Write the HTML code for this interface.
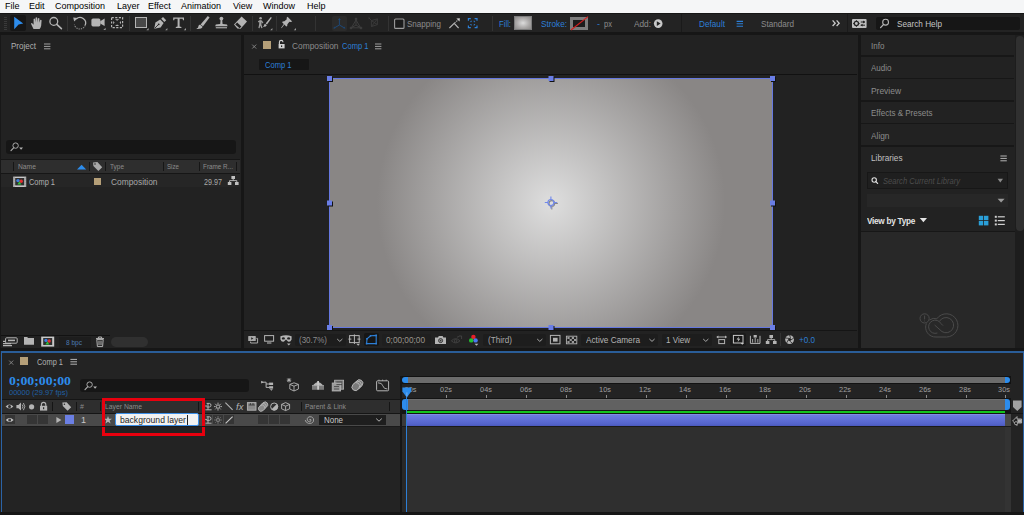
<!DOCTYPE html>
<html>
<head>
<meta charset="utf-8">
<title>After Effects</title>
<style>
*{box-sizing:border-box;margin:0;padding:0}
html,body{width:1024px;height:515px;overflow:hidden;background:#161616;font-family:"Liberation Sans",sans-serif;font-size:9px;color:#a8a8a8}
.abs,.abs *{position:absolute}
#root{position:relative;width:1024px;height:515px;overflow:hidden}
#menubar{left:0;top:0;width:1024px;height:13px;background:#f5f6f7;color:#000;font-size:9px}
#menubar span{top:0;line-height:12px;white-space:nowrap}
#toolbar{left:0;top:13px;width:1024px;height:20px;background:#161616}
.panel{background:#222}
.t{white-space:nowrap;line-height:12px}
.blue{color:#2d8ceb}
.sep{background:#161616}
</style>
</head>
<body>
<div id="root" class="abs">

<!-- MENU BAR -->
<div id="menubar">
<span style="left:5px">File</span>
<span style="left:29px">Edit</span>
<span style="left:55px">Composition</span>
<span style="left:117px">Layer</span>
<span style="left:148px">Effect</span>
<span style="left:181px">Animation</span>
<span style="left:233px">View</span>
<span style="left:263px">Window</span>
<span style="left:307px">Help</span>
</div>

<!-- TOOLBAR -->
<div id="toolbar">
<div style="left:0;top:1px;width:1024px;height:18px;background:#232323"></div>
<div class="vsep" style="left:4px;top:4px;width:3px;height:13px;background:repeating-linear-gradient(#3a3a3a 0 1px,#232323 1px 2px)"></div>
<div style="left:10px;top:2px;width:16px;height:16px;background:#161616;border-radius:2px"></div>
<svg style="left:0;top:0" width="1024" height="20" viewBox="0 13 1024 20">
<!-- selection arrow -->
<path d="M14.2 16.8 L23.2 23.6 L18.6 24.4 L14.2 29.2 Z" fill="#2d8ceb"/>
<!-- hand -->
<path d="M33.5 29 L31.2 24.2 Q30.8 22.8 32 23 L33.6 24.8 L33.6 19 Q34.3 18 35 19 L35.3 22.4 L35.6 17.8 Q36.4 16.8 37.2 17.8 L37.4 22.4 L37.9 18.4 Q38.7 17.5 39.4 18.5 L39.4 22.8 L40.2 20 Q41 19.3 41.6 20.2 L41.2 25.5 Q40.8 27.5 39.6 29 Z" fill="#b4b4b4"/>
<!-- zoom -->
<circle cx="53.8" cy="21.4" r="3.9" fill="none" stroke="#b4b4b4" stroke-width="1.3"/>
<path d="M56.8 24.4 L61.4 28.6" stroke="#b4b4b4" stroke-width="1.6" stroke-linecap="round"/>
<rect x="67" y="16" width="1" height="15" fill="#333"/>
<!-- rotate -->
<path d="M76.2 19 A5.6 5.6 0 0 1 85.2 25.2" fill="none" stroke="#b4b4b4" stroke-width="1.3"/>
<path d="M85.2 25.2 A5.6 5.6 0 0 1 74.4 24.6" fill="none" stroke="#8a8a8a" stroke-width="1.1" stroke-dasharray="1.3 1"/>
<path d="M73.2 17.4 L77.8 18 L74.2 21.6 Z" fill="#b4b4b4"/>
<!-- camera -->
<rect x="91.4" y="18.4" width="9" height="8" rx="1.6" fill="#b4b4b4"/>
<path d="M100.2 21.2 L104.6 18.6 L104.6 26 L100.2 23.6 Z" fill="#b4b4b4"/>
<path d="M105.6 27.8 L105.6 30 L103.4 30 Z" fill="#9a9a9a"/>
<!-- pan behind -->
<rect x="111.6" y="17.6" width="11" height="10" fill="none" stroke="#b4b4b4" stroke-width="1.2" stroke-dasharray="2.2 1.4"/>
<path d="M115 19.2 L119.2 19.2 L117.1 20.8 Z M115 26 L119.2 26 L117.1 24.4 Z M113.2 21 L113.2 24.2 L114.6 22.6 Z M121 21 L121 24.2 L119.6 22.6 Z" fill="#b4b4b4"/>
<rect x="129" y="16" width="1" height="15" fill="#333"/>
<!-- rect tool -->
<rect x="135.5" y="17.5" width="11" height="10" fill="#484848" stroke="#b4b4b4" stroke-width="1"/>
<path d="M148.6 28 L148.6 30.2 L146.4 30.2 Z" fill="#9a9a9a"/>
<!-- pen -->
<path d="M154.2 28.8 L155.4 22.6 L160.2 19.6 L163.6 23 L160.6 27.6 Z" fill="#b4b4b4"/>
<path d="M154.6 28.4 L158.4 24.6" stroke="#232323" stroke-width="0.9"/>
<circle cx="158.7" cy="24.3" r="0.9" fill="#232323"/>
<path d="M161.2 18.8 L163 17 L166.2 20.2 L164.4 22 Z" fill="#b4b4b4"/>
<path d="M167.4 28 L167.4 30.2 L165.2 30.2 Z" fill="#9a9a9a"/>
<!-- T -->
<path d="M173.2 17.4 L184 17.4 L184 20.2 L183 20.2 L182.6 18.8 L179.6 18.8 L179.6 26.6 L181.4 27 L181.4 28 L175.8 28 L175.8 27 L177.6 26.6 L177.6 18.8 L174.6 18.8 L174.2 20.2 L173.2 20.2 Z" fill="#b4b4b4"/>
<path d="M186 28 L186 30.2 L183.8 30.2 Z" fill="#9a9a9a"/>
<rect x="190" y="16" width="1" height="15" fill="#333"/>
<!-- brush -->
<path d="M207.8 16 L209.6 17.4 L203 26.2 L200.6 24.4 Z" fill="#b4b4b4"/>
<path d="M200.2 24.8 L202.6 26.8 Q201.8 29.4 196.2 29 Q198.6 27.8 198.4 26.2 Q198.8 24.6 200.2 24.8 Z" fill="#b4b4b4"/>
<!-- stamp -->
<circle cx="221.4" cy="18.6" r="1.9" fill="#b4b4b4"/>
<path d="M220.6 20 L222.2 20 L222.6 24 L227 24.6 L227.6 26.2 L215.2 26.2 L215.8 24.6 L220.2 24 Z" fill="#b4b4b4"/>
<rect x="215.8" y="27.2" width="11.2" height="1.1" fill="#b4b4b4"/>
<!-- eraser -->
<path d="M234 24.6 L241.6 16.6 L247 21.6 L240.6 28.8 L237.4 28.4 Z" fill="#b4b4b4"/>
<path d="M235.2 24.6 L237.2 22.6 L241.4 26.4 L239.6 28.2 Z" fill="#232323"/>
<rect x="252" y="16" width="1" height="15" fill="#333"/>
<!-- roto brush -->
<circle cx="260.6" cy="18.2" r="1.3" fill="#a0a0a0"/>
<path d="M258 21.2 L260 20 L262 20.4 L263.4 22.8 L262.6 23.4 L261.6 22 L261.4 24.4 L262.6 28 L261.4 28.2 L260.2 25.4 L259.6 28.2 L258.4 28 L259.2 24 L259.2 21.8 L258.2 22.6 Z" fill="#a0a0a0"/>
<path d="M270.8 17 L271.8 17.8 L267 24.6 L265.6 23.6 Z" fill="#b4b4b4"/>
<path d="M265.2 24 L266.8 25.2 Q266 27.2 262.8 26.8 Q264.2 26 264.2 24.8 Q264.4 23.8 265.2 24 Z" fill="#b4b4b4"/>
<path d="M272.4 28 L272.4 30.2 L270.2 30.2 Z" fill="#9a9a9a"/>
<rect x="276" y="16" width="1" height="15" fill="#333"/>
<!-- pin -->
<path d="M287.6 16.8 L292.2 21.4 L290.8 22 L289.4 21.8 L287.4 24.2 L287.2 26 L286.2 26.4 L284.4 24.6 L281.6 28.2 L281.2 27.8 L283.8 24 L282.2 22.4 L282.6 21.4 L284.4 21.2 L286.8 19.2 L286.6 17.8 Z" fill="#b4b4b4"/>
<path d="M296 28 L296 30.2 L293.8 30.2 Z" fill="#9a9a9a"/>
<rect x="315" y="16" width="1" height="15" fill="#333"/>
<!-- local axis -->
<rect x="332" y="16" width="15" height="15" rx="2" fill="#2b2b2b"/>
<g stroke="#1d4877" stroke-width="1" fill="#1d4877">
<path d="M339.4 19.4 L339.4 25 M339.4 25 L334.6 27.8 M339.4 25 L344.2 27.8" fill="none"/>
<path d="M339.4 18 L340.8 20 L338 20 Z M333.4 28.4 L334.2 26.4 L335.4 28.4 Z M345.4 28.4 L344.6 26.4 L343.4 28.4 Z" stroke="none"/>
</g>
<!-- world axis -->
<g stroke="#3e3e3e" stroke-width="1" fill="none">
<path d="M356 20 L356 25 M356 25 L351.4 27.8 M356 25 L360.6 27.8 M356 20 L351.4 27.8 L360.6 27.8 Z"/>
<circle cx="356" cy="19" r="0.9" fill="#3e3e3e"/><circle cx="351" cy="28" r="0.9" fill="#3e3e3e"/><circle cx="361" cy="28" r="0.9" fill="#3e3e3e"/>
</g>
<!-- view axis -->
<g stroke="#3a3a3a" stroke-width="1" fill="none">
<path d="M371.4 20.6 L377.4 18.8 L377.4 24.6 L371.4 26.6 Z M371.4 20.6 L377.4 24.6 M377.4 18.8 L371.4 26.6 M371.6 20.6 L368.8 17.8"/>
<path d="M368.4 17.4 L370.4 17.8 L368.8 19.4 Z" fill="#3a3a3a" stroke="none"/>
</g>
<rect x="388" y="16" width="1" height="15" fill="#333"/>
<!-- checkbox -->
<rect x="394.6" y="19" width="9.4" height="9.4" rx="1" fill="#1b1b1b" stroke="#9c9c9c" stroke-width="1.1"/>
<!-- snap arrow -->
<path d="M449.4 28 L454.2 23.4 L458.6 28" fill="none" stroke="#b4b4b4" stroke-width="1.1"/>
<path d="M454.4 23.2 L458.6 19.4" stroke="#a0a0a0" stroke-width="1.1" stroke-dasharray="1.6 0.8"/>
<path d="M456.4 18.4 L459.8 18.2 L459.6 21.6 Z" fill="#d0d0d0"/>
<!-- snap bracket blue -->
<g stroke="#2d7fd6" stroke-width="1.2" fill="none">
<path d="M468.4 20.8 L468.4 18.6 L470.8 18.6 M474.6 18.6 L477 18.6 L477 20.8 M477 25.4 L477 27.6 L474.6 27.6 M470.8 27.6 L468.4 27.6 L468.4 25.4"/>
<path d="M470.8 22.2 L470.8 21.2 L471.8 21.2 M473.6 21.2 L474.6 21.2 L474.6 22.2 M474.6 24 L474.6 25 L473.6 25 M471.8 25 L470.8 25 L470.8 24" stroke-width="0.9"/>
</g>
<rect x="492" y="16" width="1" height="15" fill="#333"/>
<!-- add play -->
<circle cx="658.2" cy="23.6" r="4.3" fill="#c8c8c8"/>
<path d="M656.8 21.2 L660.6 23.6 L656.8 26 Z" fill="#232323"/>
<rect x="681" y="14" width="1" height="18" fill="#1a1a1a"/>
<!-- hamburger blue -->
<path d="M736.6 21.4 H743 M736.6 23.8 H743 M736.6 26.2 H743" stroke="#2d7fd6" stroke-width="1.1"/>
<!-- >> -->
<path d="M832.6 20.4 L835.2 23.2 L832.6 26 M836.6 20.4 L839.2 23.2 L836.6 26" fill="none" stroke="#c8c8c8" stroke-width="1.3"/>
<rect x="847" y="14" width="1" height="18" fill="#1a1a1a"/>
<!-- sync settings -->
<rect x="852" y="19" width="14.6" height="9" rx="1" fill="#bdbdbd"/>
<circle cx="856.4" cy="23.5" r="2.1" fill="none" stroke="#232323" stroke-width="1.3"/>
<path d="M856.4 20.2 V21 M856.4 26 V26.8 M853.2 23.5 H854 M858.8 23.5 H859.6" stroke="#232323" stroke-width="1"/>
<path d="M860.8 22 H865 M860.8 25.2 H865" stroke="#232323" stroke-width="1"/>
<path d="M863 20.6 L865.2 22 L863 23.4 Z M862.6 23.8 L860.4 25.2 L862.6 26.6 Z" fill="#232323"/>
<!-- search help box -->
<rect x="876" y="17" width="144" height="13" rx="2" fill="#161616"/>
<circle cx="885.6" cy="22.2" r="2.9" fill="none" stroke="#b4b4b4" stroke-width="1.1"/>
<path d="M883.4 24.6 L880.6 27.6" stroke="#b4b4b4" stroke-width="1.3" stroke-linecap="round"/>
</svg>
<span class="t" style="transform-origin:0 50%;transform:scaleX(0.894);left:407px;top:5px;color:#8c8c8c;font-size:9px">Snapping</span>
<span class="t" style="transform-origin:0 50%;transform:scaleX(0.857);left:499px;top:5px;color:#2d7fd6;font-size:9px">Fill:</span>
<div style="left:514px;top:3px;width:18px;height:14px;border:1px solid #7d7d7d;background:radial-gradient(ellipse at center,#dcdcdc 0%,#a8a6a5 60%,#8c8a89 100%)"></div>
<span class="t" style="transform-origin:0 50%;transform:scaleX(0.912);left:541px;top:5px;color:#2d7fd6;font-size:9px">Stroke:</span>
<div style="left:570px;top:4px;width:18px;height:13px;background:#7d7d7d"></div>
<div style="left:573px;top:7px;width:12px;height:7px;background:#1c1c1c"></div>
<svg style="left:569px;top:2px" width="21" height="17"><path d="M2 15 L19 1.6" stroke="#d21f1f" stroke-width="1.2"/></svg>
<span class="t" style="left:597px;top:5px;color:#2d7fd6;font-size:9px">-</span>
<span class="t" style="transform-origin:0 50%;transform:scaleX(0.841);left:604px;top:5px;color:#8c8c8c;font-size:9px">px</span>
<span class="t" style="transform-origin:0 50%;transform:scaleX(0.918);left:634px;top:5px;color:#8c8c8c;font-size:9px">Add:</span>
<span class="t" style="transform-origin:0 50%;transform:scaleX(0.911);left:699px;top:5px;color:#2d7fd6;font-size:9px">Default</span>
<span class="t" style="transform-origin:0 50%;transform:scaleX(0.903);left:761px;top:5px;color:#8c8c8c;font-size:9px">Standard</span>
<span class="t" style="transform-origin:0 50%;transform:scaleX(0.909);left:897px;top:5px;color:#c4c4c4;font-size:9px">Search Help</span>

</div>

<!-- PROJECT PANEL -->
<div id="project" class="panel" style="left:0;top:35px;width:241px;height:313px">
<div style="left:0;top:0;width:1px;height:313px;background:#181818"></div>
<span class="t" style="transform-origin:0 50%;transform:scaleX(0.892);left:11px;top:5px;color:#b0b0b0;font-size:9px">Project</span>
<svg style="left:44px;top:8px" width="8" height="8"><path d="M0 1 H6.4 M0 3.4 H6.4 M0 5.8 H6.4" stroke="#a0a0a0" stroke-width="1"/></svg>
<!-- search -->
<div style="left:6px;top:105px;width:230px;height:14px;background:#161616;border-radius:3px"></div>
<svg style="left:9px;top:106px" width="18" height="12"><circle cx="6.6" cy="4.6" r="2.7" fill="none" stroke="#a8a8a8" stroke-width="1"/><path d="M4.6 6.8 L2 9.6" stroke="#a8a8a8" stroke-width="1.2" stroke-linecap="round"/><path d="M10.2 6.6 L14 6.6 L12.1 8.8 Z" fill="#b4b4b4"/></svg>
<!-- header row -->
<div style="left:1px;top:124px;width:239px;height:15px;background:#161616"></div>
<div style="left:1px;top:125px;width:239px;height:13px;background:#2e2e2e"></div>
<div style="left:13px;top:127px;width:1px;height:9px;background:#161616"></div>
<div style="left:89px;top:127px;width:1px;height:9px;background:#161616"></div>
<div style="left:105px;top:127px;width:1px;height:9px;background:#161616"></div>
<div style="left:163px;top:127px;width:1px;height:9px;background:#161616"></div>
<div style="left:199px;top:127px;width:1px;height:9px;background:#161616"></div>
<div style="left:236px;top:127px;width:1px;height:9px;background:#161616"></div>
<span class="t" style="transform-origin:0 50%;transform:scaleX(0.843);left:18px;top:126px;color:#8c8c8c;font-size:8px">Name</span>
<svg style="left:76px;top:129px" width="12" height="6"><path d="M1 5.4 L5.6 0.8 L10.2 5.4 Z" fill="#2d8ceb"/></svg>
<svg style="left:92px;top:126px" width="12" height="12"><path d="M1 1.4 L5.4 1 L10.2 6.2 L6.4 10 L1.4 5 Z" fill="#a8a8a8"/><circle cx="3" cy="3" r="0.8" fill="#2e2e2e"/></svg>
<span class="t" style="transform-origin:0 50%;transform:scaleX(0.807);left:110px;top:126px;color:#8c8c8c;font-size:8px">Type</span>
<span class="t" style="transform-origin:0 50%;transform:scaleX(0.771);left:167px;top:126px;color:#8c8c8c;font-size:8px">Size</span>
<span class="t" style="transform-origin:0 50%;transform:scaleX(0.794);left:203px;top:126px;color:#8c8c8c;font-size:8px">Frame R...</span>
<!-- row -->
<div style="left:1px;top:139px;width:239px;height:13px;background:#262626"></div>
<svg style="left:13px;top:140.6px" width="14" height="12"><rect x="0.2" y="0.6" width="13" height="10.4" fill="#c8c8c8"/><rect x="2.2" y="2" width="9" height="7.4" fill="#303030"/><circle cx="5" cy="4.6" r="1.7" fill="#3a7fe0"/><circle cx="8.2" cy="5.2" r="1.7" fill="#e03030"/><path d="M4.4 8.6 L6.4 5.6 L8.4 8.6 Z" fill="#2fc43a"/><path d="M1.2 1.6 V10.4 M12.2 1.6 V10.4" stroke="#555" stroke-width="0.8" stroke-dasharray="1 1"/></svg>
<span class="t" style="transform-origin:0 50%;transform:scaleX(0.825);left:29px;top:140.6px;color:#b0b0b0;font-size:9px">Comp 1</span>
<div style="left:94px;top:143px;width:7px;height:7px;background:#b59f78"></div>
<span class="t" style="transform-origin:0 50%;transform:scaleX(0.929);left:111px;top:140.6px;color:#a8a8a8;font-size:9px">Composition</span>
<span class="t" style="transform-origin:0 50%;transform:scaleX(0.799);left:204px;top:140.6px;color:#a8a8a8;font-size:9px">29.97</span>
<svg style="left:227px;top:140px" width="13" height="12"><g fill="#c0c0c0"><rect x="4.4" y="1" width="3.6" height="3"/><rect x="0.8" y="7" width="3.6" height="3"/><rect x="8" y="7" width="3.6" height="3"/></g><path d="M6.2 4 V5.6 M2.6 7 V5.6 H9.8 V7" stroke="#c0c0c0" stroke-width="0.9" fill="none"/></svg>
<!-- footer -->
<div style="left:1px;top:300px;width:109px;height:1px;background:#121212"></div>
<svg style="left:2px;top:302px" width="16" height="11"><rect x="3.6" y="0.8" width="11.6" height="5.4" rx="1" fill="none" stroke="#b4b4b4" stroke-width="1"/><rect x="6" y="2.6" width="7" height="1.6" fill="#b4b4b4"/><path d="M1 4.4 H3.4 M1 6.6 H9 M1 8.6 H10" stroke="#b4b4b4" stroke-width="1.1"/></svg>
<svg style="left:23px;top:301px" width="12" height="10"><path d="M1 1 H4.6 V2 H11 V8.8 H1 Z" fill="#b4b4b4"/></svg>
<svg style="left:41px;top:301px" width="14" height="12"><rect x="0.2" y="0.6" width="13" height="10" fill="#c8c8c8"/><rect x="2.2" y="2" width="9" height="7" fill="#303030"/><circle cx="5" cy="4.4" r="1.7" fill="#3a7fe0"/><circle cx="8.2" cy="5" r="1.7" fill="#e03030"/><path d="M4.4 8.4 L6.4 5.4 L8.4 8.4 Z" fill="#2fc43a"/></svg>
<div style="left:59px;top:302px;width:32px;height:11px;background:#1d1d1d;border-radius:1px"></div>
<span class="t" style="transform-origin:0 50%;transform:scaleX(0.817);left:66px;top:302px;color:#4c7ab4;font-size:8px;line-height:11px">8 bpc</span>
<svg style="left:95px;top:301px" width="10" height="12"><path d="M1 2.6 H9 M3.4 2.4 V1 H6.6 V2.4" stroke="#b4b4b4" stroke-width="1" fill="none"/><path d="M1.8 3.4 H8.2 L7.6 10.6 H2.4 Z" fill="none" stroke="#b4b4b4" stroke-width="1"/><path d="M4 4.6 V9.2 M6 4.6 V9.2" stroke="#b4b4b4" stroke-width="1"/></svg>
<div style="left:111px;top:302px;width:37px;height:10px;background:#303030;border-radius:5px"></div>
<div style="left:111px;top:301px;width:116px;height:12px;background:#262626;z-index:-1"></div>

</div>

<!-- COMP PANEL -->
<div id="comp" class="panel" style="left:244px;top:35px;width:614px;height:313px">
<svg style="left:7px;top:8px" width="8" height="8"><path d="M1.2 1.6 L5.2 5.6 M5.2 1.6 L1.2 5.6" stroke="#8a8a8a" stroke-width="0.9"/></svg>
<div style="left:19px;top:6px;width:8px;height:8px;background:#b59f78"></div>
<svg style="left:33px;top:4px" width="10" height="11"><path d="M2.4 5 V3.2 A1.8 1.8 0 0 1 6 3.2" fill="none" stroke="#d0d0d0" stroke-width="1.1"/><rect x="1.6" y="5" width="6" height="4.4" fill="#d0d0d0"/><rect x="4" y="6.4" width="1.2" height="1.6" fill="#232323"/></svg>
<span class="t" style="transform-origin:0 50%;transform:scaleX(0.929);left:48px;top:5px;color:#8c8c8c;font-size:9px">Composition</span>
<span class="t" style="transform-origin:0 50%;transform:scaleX(0.841);left:98px;top:5px;color:#2d7fd6;font-size:9px">Comp 1</span>
<svg style="left:131px;top:8px" width="8" height="8"><path d="M0 1 H6.4 M0 3.4 H6.4 M0 5.8 H6.4" stroke="#a0a0a0" stroke-width="1"/></svg>
<div style="left:15px;top:24px;width:50px;height:11px;background:#161616;border-radius:1px"></div>
<span class="t" style="transform-origin:0 50%;transform:scaleX(0.841);left:21px;top:24.5px;color:#2d7fd6;font-size:9px;line-height:11px">Comp 1</span>
<div style="left:0;top:39px;width:613px;height:1px;background:#111"></div>
<!-- viewer image -->
<div style="left:86px;top:44px;width:442px;height:248px;background:radial-gradient(circle 174px at 50% 50%,#dedede 0%,#898685 100%)"></div>
<svg style="left:80px;top:38px" width="456" height="262" viewBox="324 73 456 262">
<rect x="329.5" y="78.5" width="443" height="249" fill="none" stroke="#6678e0" stroke-width="1"/>
<g fill="#111"><rect x="328" y="77" width="5" height="5"/><rect x="549.5" y="77" width="5" height="5"/><rect x="771" y="77" width="5" height="5"/><rect x="328" y="201.5" width="5" height="5"/><rect x="771" y="201.5" width="5" height="5"/><rect x="328" y="326" width="5" height="5"/><rect x="549.5" y="326" width="5" height="5"/><rect x="771" y="326" width="5" height="5"/></g>
<g fill="#6a7ee6"><rect x="327" y="76" width="5" height="5"/><rect x="548.5" y="76" width="5" height="5"/><rect x="770" y="76" width="5" height="5"/><rect x="327" y="200.5" width="5" height="5"/><rect x="770" y="200.5" width="5" height="5"/><rect x="327" y="325" width="5" height="5"/><rect x="548.5" y="325" width="5" height="5"/><rect x="770" y="325" width="5" height="5"/></g>
<!-- anchor -->
<g transform="translate(0.9,0.9)" opacity="0.55"><circle cx="550.9" cy="202.5" r="2.8" fill="none" stroke="#444" stroke-width="1.2"/><path d="M550.9 205.4 V208.6 M553.8 202.5 H557" stroke="#444" stroke-width="1.1"/></g>
<circle cx="550.9" cy="202.5" r="3" fill="none" stroke="#7088ea" stroke-width="1.2"/>
<path d="M550.9 196.4 V199.6 M550.9 205.4 V208.6 M544.8 202.5 H548 M553.8 202.5 H557" stroke="#7088ea" stroke-width="1.1"/>
</svg>
<!-- footer -->
<div style="left:0;top:295px;width:613px;height:1px;background:#151515"></div>
<div style="left:51px;top:299px;width:51px;height:12px;background:#1d1d1d;border-radius:2px"></div>
<div style="left:120px;top:298px;width:15px;height:13px;background:#161616;border-radius:2px"></div>
<div style="left:138px;top:299px;width:49px;height:12px;background:#1f1f1f;border-radius:2px"></div>
<div style="left:239px;top:299px;width:63px;height:12px;background:#1d1d1d;border-radius:2px"></div>
<div style="left:337px;top:299px;width:77px;height:12px;background:#1d1d1d;border-radius:2px"></div>
<div style="left:418px;top:299px;width:50px;height:12px;background:#1d1d1d;border-radius:2px"></div>
<div style="left:486px;top:298px;width:16px;height:13px;background:#191919;border-radius:2px"></div>
<svg style="left:0;top:296px" width="613" height="17" viewBox="244 331 613 17">
<!-- always preview -->
<g fill="none" stroke="#a8a8a8" stroke-width="1"><path d="M250.6 341.6 V343 H257.6 V338.4 H256.4"/></g>
<rect x="248.2" y="336" width="7.6" height="5" rx="0.6" fill="#a8a8a8"/><path d="M251.2 337.2 L253.4 338.5 L251.2 339.8 Z" fill="#232323"/>
<!-- monitor -->
<rect x="264.6" y="335.6" width="9" height="5.6" fill="none" stroke="#b4b4b4" stroke-width="1"/><path d="M267 343 H271.4" stroke="#b4b4b4" stroke-width="1.1"/>
<!-- goggles -->
<path d="M280.4 336.2 Q286 334.4 291.6 336.2 L291.6 339.4 Q290.4 342.4 288 341.4 L286 339.6 L284 341.4 Q281.6 342.4 280.4 339.4 Z" fill="#b4b4b4"/>
<ellipse cx="283.4" cy="338.4" rx="1.5" ry="1.2" fill="#232323"/><ellipse cx="288.6" cy="338.4" rx="1.5" ry="1.2" fill="#232323"/>
<path d="M287 343.6 H290.6 L288.8 345.6 Z" fill="#b4b4b4"/>
<path d="M337.2 339 L339.8 341.4 L342.4 339" fill="none" stroke="#a8a8a8" stroke-width="1"/>
<!-- grid -->
<rect x="349.6" y="335.6" width="9.6" height="7" fill="none" stroke="#b4b4b4" stroke-width="1"/><path d="M354.4 334.4 V344 M348.4 339.1 H351.4 M357.4 339.1 H360.4" stroke="#b4b4b4" stroke-width="1"/>
<path d="M356.4 343.8 H360 L358.2 345.8 Z" fill="#b4b4b4"/>
<!-- mask toggle -->
<path d="M366.6 343.6 L367 338.8 L370.6 335.8 L376.2 335.4 L376.2 343.6 Z" fill="none" stroke="#2d7fd6" stroke-width="1.1"/>
<g fill="#2d7fd6"><rect x="365.8" y="342.8" width="1.6" height="1.6"/><rect x="366.2" y="338" width="1.6" height="1.6"/><rect x="369.8" y="335" width="1.6" height="1.6"/><rect x="375.4" y="334.6" width="1.6" height="1.6"/><rect x="375.4" y="342.8" width="1.6" height="1.6"/></g>
<!-- camera -->
<path d="M435 337.4 H438 L438.8 336 H442.6 L443.4 337.4 H446 V344 H435 Z" fill="#b4b4b4"/><circle cx="440.6" cy="340.6" r="2" fill="none" stroke="#232323" stroke-width="0.9"/><path d="M440.6 339.6 V341.6 M439.6 340.6 H441.6" stroke="#232323" stroke-width="0.7"/>
<!-- show snapshot dim -->
<g stroke="#404040" fill="none" stroke-width="1"><path d="M451.4 340.8 Q455.6 336.6 460 340.8 Q455.6 345 451.4 340.8 Z"/><circle cx="455.6" cy="340.8" r="1.3"/><path d="M457 337 H458.4 L459 336 H461.6 V339"/></g>
<!-- rgb -->
<circle cx="473.4" cy="337" r="2.2" fill="#e8202a"/><circle cx="471.2" cy="340.4" r="2.2" fill="#22c030"/><circle cx="475.6" cy="340.4" r="2.2" fill="#4a78f0"/>
<path d="M474.6 343.8 H478.4 L476.5 345.8 Z" fill="#b4b4b4"/>
<path d="M537.2 339 L539.8 341.4 L542.4 339" fill="none" stroke="#a8a8a8" stroke-width="1"/>
<!-- ROI -->
<rect x="550.4" y="335.4" width="9.6" height="8.4" fill="none" stroke="#b4b4b4" stroke-width="1"/><rect x="553" y="337.8" width="4.6" height="3.8" fill="#b4b4b4"/>
<!-- transparency grid -->
<rect x="566.4" y="336.2" width="10.4" height="7.6" fill="none" stroke="#b4b4b4" stroke-width="0.9"/>
<g fill="#9a9a9a"><rect x="567.4" y="337" width="2.2" height="2"/><rect x="571.8" y="337" width="2.2" height="2"/><rect x="569.6" y="339" width="2.2" height="2"/><rect x="574" y="339" width="2.2" height="2"/><rect x="567.4" y="341" width="2.2" height="2"/><rect x="571.8" y="341" width="2.2" height="2"/></g>
<path d="M649.4 339 L652 341.4 L654.6 339" fill="none" stroke="#a8a8a8" stroke-width="1"/>
<path d="M703.2 339 L705.8 341.4 L708.4 339" fill="none" stroke="#a8a8a8" stroke-width="1"/>
<!-- pixel aspect -->
<path d="M717.4 337 H726" stroke="#b4b4b4" stroke-width="1"/><path d="M716.2 337 L718.4 335.6 V338.4 Z M727.2 337 L725 335.6 V338.4 Z" fill="#b4b4b4"/><rect x="718.8" y="339.6" width="5.8" height="4" fill="none" stroke="#b4b4b4" stroke-width="1"/>
<!-- fast previews -->
<rect x="733.4" y="335.4" width="9.6" height="7.6" fill="none" stroke="#c8c8c8" stroke-width="1"/><path d="M739 336.4 L736.6 339.6 H738.4 L737.6 342.2 L740.2 338.8 H738.4 Z" fill="#c8c8c8"/><path d="M740.6 343 H744 L742.3 344.8 Z" fill="#c8c8c8"/>
<!-- timeline icon -->
<path d="M750.4 335.8 V343.4 H760 V335.8" fill="none" stroke="#b4b4b4" stroke-width="1"/><rect x="753.6" y="335" width="3.2" height="2.6" fill="#b4b4b4"/><path d="M752.6 342.6 V339 M755.2 342.6 V338 M757.8 342.6 V339" stroke="#b4b4b4" stroke-width="0.9"/>
<!-- flowchart -->
<g fill="#b4b4b4"><rect x="769.4" y="335" width="3.6" height="3"/><rect x="765.8" y="341" width="3.6" height="3"/><rect x="773" y="341" width="3.6" height="3"/></g><path d="M771.2 338 V339.6 M767.6 341 V339.6 H774.8 V341" stroke="#b4b4b4" stroke-width="0.9" fill="none"/>
<rect x="780" y="333" width="1" height="13" fill="#333"/>
<!-- aperture -->
<circle cx="789.6" cy="339.6" r="4.4" fill="#b4b4b4"/><circle cx="789.6" cy="339.6" r="1.5" fill="#232323"/>
<path d="M789.6 335 L790.6 338.4 M793.8 338 L790.8 340 M792.4 343.2 L789.6 341 M786.6 343 L788.2 340 M785.4 338 L789 338.4" stroke="#232323" stroke-width="0.8"/>
</svg>
<span class="t" style="transform-origin:0 50%;transform:scaleX(0.888);left:55px;top:299px;color:#8c8c8c;font-size:9px">(30.7%)</span>
<span class="t" style="transform-origin:0 50%;transform:scaleX(0.917);left:142px;top:299px;color:#9a958c;font-size:9px">0;00;00;00</span>
<span class="t" style="transform-origin:0 50%;transform:scaleX(0.906);left:244px;top:299px;color:#a8a8a8;font-size:9px">(Third)</span>
<span class="t" style="transform-origin:0 50%;transform:scaleX(0.915);left:342px;top:299px;color:#b4b4b4;font-size:9px">Active Camera</span>
<span class="t" style="transform-origin:0 50%;transform:scaleX(0.894);left:422px;top:299px;color:#b4b4b4;font-size:9px">1 View</span>
<span class="t" style="transform-origin:0 50%;transform:scaleX(0.900);left:555px;top:299px;color:#2d7fd6;font-size:9px">+0.0</span>

</div>

<!-- RIGHT PANELS -->
<div id="right" style="left:861px;top:35px;width:163px;height:313px">
<div style="left:0;top:0;width:154px;height:313px;background:#222"></div>
<div style="left:154px;top:0;width:9px;height:313px;background:#1d1d1d"></div>
<div style="left:155px;top:1px;width:8px;height:195px;background:#303030;border-radius:4px"></div>
<div style="left:0;top:20px;width:153px;height:2px;background:#171717"></div>
<div style="left:0;top:43px;width:153px;height:1px;background:#171717"></div>
<div style="left:0;top:65px;width:153px;height:2px;background:#171717"></div>
<div style="left:0;top:88px;width:153px;height:1px;background:#171717"></div>
<div style="left:0;top:110px;width:153px;height:2px;background:#171717"></div>
<span class="t" style="transform-origin:0 50%;transform:scaleX(0.892);left:9.5px;top:5px;color:#8c8c8c;font-size:9px">Info</span>
<span class="t" style="transform-origin:0 50%;transform:scaleX(0.890);left:9.5px;top:27px;color:#8c8c8c;font-size:9px">Audio</span>
<span class="t" style="transform-origin:0 50%;transform:scaleX(0.937);left:9.5px;top:50px;color:#8c8c8c;font-size:9px">Preview</span>
<span class="t" style="transform-origin:0 50%;transform:scaleX(0.893);left:9.5px;top:72px;color:#8c8c8c;font-size:9px">Effects &amp; Presets</span>
<span class="t" style="transform-origin:0 50%;transform:scaleX(0.924);left:9.5px;top:95px;color:#8c8c8c;font-size:9px">Align</span>
<span class="t" style="transform-origin:0 50%;transform:scaleX(0.913);left:9.5px;top:117px;color:#c0c0c0;font-size:9px">Libraries</span>
<svg style="left:139px;top:120px" width="8" height="8"><path d="M0.4 1 H6.8 M0.4 3.4 H6.8 M0.4 5.8 H6.8" stroke="#b4b4b4" stroke-width="1"/></svg>
<div style="left:6px;top:137px;width:141px;height:17px;background:#1f1f1f;border:1px solid #171717"></div>
<svg style="left:9px;top:141px" width="10" height="10"><circle cx="4.2" cy="4" r="2.2" fill="none" stroke="#e0e0e0" stroke-width="1.1"/><path d="M5.8 5.6 L7.6 7.4" stroke="#e0e0e0" stroke-width="1.3" stroke-linecap="round"/></svg>
<span class="t" style="transform-origin:0 50%;transform:scaleX(0.896);left:22px;top:140px;color:#4c4c4c;font-size:8.5px;font-style:italic">Search Current Library</span>
<svg style="left:136px;top:143px" width="8" height="6"><path d="M0.6 0.8 H6 L3.3 4.4 Z" fill="#8a8a8a"/></svg>
<div style="left:6px;top:159px;width:141px;height:13px;background:#272727"></div>
<svg style="left:136px;top:163px" width="9" height="6"><path d="M0.6 0.8 H7.6 L4.1 4.6 Z" fill="#9a9a9a"/></svg>
<span class="t" style="transform-origin:0 50%;transform:scaleX(0.913);left:6px;top:180px;color:#e4e4e4;font-size:9px;font-weight:bold;letter-spacing:-0.3px">View by Type</span>
<svg style="left:58px;top:182px" width="10" height="7"><path d="M0.8 1 H8 L4.4 5.2 Z" fill="#e4e4e4"/></svg>
<svg style="left:117px;top:180px" width="12" height="12"><g fill="#2a9fd8"><rect x="0.8" y="0.8" width="4.4" height="4.4"/><rect x="6" y="0.8" width="4.4" height="4.4"/><rect x="0.8" y="6" width="4.4" height="4.4"/><rect x="6" y="6" width="4.4" height="4.4"/></g></svg>
<svg style="left:133px;top:180px" width="12" height="12"><g fill="#d0d0d0"><rect x="0.8" y="0.8" width="2" height="2"/><rect x="0.8" y="4.6" width="2" height="2"/><rect x="0.8" y="8.4" width="2" height="2"/><rect x="3.8" y="1.2" width="7" height="1.2"/><rect x="3.8" y="5" width="7" height="1.2"/><rect x="3.8" y="8.8" width="7" height="1.2"/></g></svg>
<div style="left:0;top:196px;width:154px;height:1px;background:#171717"></div>
<div style="left:0;top:197px;width:154px;height:116px;background:#282828"></div>
<svg style="left:56px;top:275px" width="42" height="30" viewBox="917 310 42 30">
<g fill="none" stroke="#4a4a4a" stroke-width="1">
<circle cx="924.6" cy="318.4" r="4.6"/>
<path d="M924.6 315.6 V319.4 M924.6 320.6 V321.4"/>
<path d="M929.4 320 Q933.2 317.4 936.8 318.8 A11.6 11.6 0 1 1 946.6 337 L936 337 A9.8 9.8 0 0 1 926.4 323.4"/>
<path d="M939.4 321.4 A7.6 7.6 0 1 1 942 331.6 L934.6 325"/>
<path d="M937.4 333 A6.6 6.6 0 1 1 941 323.6 L943 325.6"/>
</g></svg>

</div>

<!-- TIMELINE -->
<div id="timeline" class="panel" style="left:0;top:350px;width:1024px;height:165px">
<!-- all coords relative to (0,350) -->
<div style="left:0;top:0;width:1024px;height:1px;background:#161616"></div>
<div style="left:1px;top:1px;width:1023px;height:161px;border:1px solid #2b63a6;border-top:2px solid #2a5d98;border-bottom:none;background:#232323"></div>
<div style="left:0;top:162px;width:1024px;height:3px;background:#161616"></div>
<!-- tab -->
<svg style="left:8px;top:9px" width="8" height="8"><path d="M1.2 1.6 L5.2 5.6 M5.2 1.6 L1.2 5.6" stroke="#8a8a8a" stroke-width="0.9"/></svg>
<div style="left:20px;top:7px;width:8px;height:8px;background:#b59f78"></div>
<span class="t" style="transform-origin:0 50%;transform:scaleX(0.825);left:37px;top:6px;color:#b0b0b0;font-size:9px">Comp 1</span>
<svg style="left:70px;top:8px" width="9" height="8"><path d="M0.4 1.4 H7 M0.4 3.8 H7 M0.4 6.2 H7" stroke="#b4b4b4" stroke-width="1"/></svg>
<!-- timecode -->
<span class="t" style="transform-origin:0 50%;transform:scaleX(1.060);left:9px;top:22.5px;color:#2d8ceb;font-family:'Liberation Serif',serif;font-weight:bold;font-size:13px;line-height:16px">0;00;00;00</span>
<span class="t" style="transform-origin:0 50%;transform:scaleX(1.003);left:9px;top:37.5px;color:#2060a4;font-size:7.5px;line-height:10px">00000 (29.97 fps)</span>
<!-- search -->
<div style="left:80px;top:29px;width:169px;height:13px;background:#161616;border-radius:3px"></div>
<svg style="left:83px;top:30px" width="18" height="12"><circle cx="6.6" cy="4.6" r="2.7" fill="none" stroke="#a8a8a8" stroke-width="1"/><path d="M4.6 6.8 L2 9.6" stroke="#a8a8a8" stroke-width="1.2" stroke-linecap="round"/><path d="M10.2 6.6 L14 6.6 L12.1 8.8 Z" fill="#b4b4b4"/></svg>
<!-- icon strip -->
<svg style="left:255px;top:24px" width="145" height="22" viewBox="255 374 145 22">
<g transform="translate(0.5,-2.4)">
<g stroke="#b4b4b4" fill="none" stroke-width="1"><path d="M261.6 384.6 H265.6 M265.6 384.6 V389.8 H268.6 M265.6 386.4 H268.6"/></g>
<g fill="#b4b4b4"><rect x="268.6" y="385" width="4" height="2.4"/><rect x="268.6" y="388.6" width="4" height="2.4"/><path d="M260.6 383.2 L263.4 384.6 L260.6 386 Z"/><path d="M269.4 391.6 H272.4 L270.9 393.2 Z"/></g>
</g>
<g transform="translate(0.6,-1.6)">
<g stroke="#b4b4b4" fill="none" stroke-width="0.9"><path d="M293.4 384.4 L297.8 386 L297.8 390.6 L293.4 392.6 L289.2 390.6 L289.2 386 Z M289.2 386 L293.4 387.8 L297.8 386 M293.4 387.8 V392.6"/><path d="M288.4 379.6 V384 M286.2 381.8 H290.6 M286.8 380.2 L290 383.4 M290 380.2 L286.8 383.4"/></g>
</g>
<g transform="translate(-1.6,-2)">
<path d="M313.6 387.6 H325.6 V391.8 H313.6 Z" fill="#7a7a7a"/><path d="M315.2 386.6 Q319.6 381.6 324 386.6 L324 387.6 H315.2 Z" fill="#b4b4b4"/><rect x="318.8" y="383" width="1.8" height="8.6" fill="#c8c8c8"/><path d="M313.6 387.6 H325.6" stroke="#b4b4b4" stroke-width="0.8"/>
</g>
<g transform="translate(-2,-2)">
<rect x="336.6" y="382.2" width="9" height="9" fill="#7a7a7a" stroke="#b4b4b4" stroke-width="0.8"/><rect x="334.2" y="385" width="8.4" height="8" fill="#9a9a9a" stroke="#b4b4b4" stroke-width="0.8"/><path d="M338.4 384 H344 M338.4 386.6 H344 M336 388.6 H341 M336 391 H341" stroke="#3a3a3a" stroke-width="0.8"/>
</g>
<g transform="translate(-3.4,-2)" fill="#7a7a7a" stroke="#b4b4b4" stroke-width="0.9"><ellipse cx="362.4" cy="385.8" rx="3.6" ry="4.2" transform="rotate(35 362.4 385.8)"/><ellipse cx="360.8" cy="387.2" rx="3.6" ry="4.2" transform="rotate(35 360.8 387.2)"/><ellipse cx="359.2" cy="388.6" rx="3.6" ry="4.2" transform="rotate(35 359.2 388.6)"/></g>
<g transform="translate(-1,-2.2)">
<rect x="377.6" y="383" width="12" height="10" rx="1" fill="none" stroke="#b4b4b4" stroke-width="1"/><path d="M379 385 Q383.2 385 383.8 388 Q384.6 391.2 388.4 391.2" fill="none" stroke="#b4b4b4" stroke-width="0.9"/><path d="M380 381.8 V383 M383.6 381.8 V383 M387.2 381.8 V383" stroke="#b4b4b4" stroke-width="0.8"/>
</g>
</svg>
<!-- column header row -->
<div style="left:2px;top:49px;width:399px;height:15px;background:#151515"></div>
<div style="left:2px;top:50px;width:399px;height:13px;background:#2e2e2e"></div>
<svg style="left:2px;top:50px" width="399" height="13" viewBox="2 400 399 13">
<!-- eye -->
<path d="M5.6 406.6 Q9.4 402.6 13.4 406.6 Q9.4 410.6 5.6 406.6 Z" fill="#b4b4b4"/><circle cx="9.5" cy="406.6" r="1.5" fill="#2e2e2e"/>
<!-- speaker -->
<path d="M16.4 405 H18.4 L21 402.6 V410.6 L18.4 408.2 H16.4 Z" fill="#b4b4b4"/><path d="M22.2 404.6 Q23.8 406.6 22.2 408.6 M23.4 403 Q26.2 406.6 23.4 410.2" stroke="#b4b4b4" stroke-width="0.9" fill="none"/>
<circle cx="31.6" cy="406.8" r="2.6" fill="#b4b4b4"/>
<!-- lock -->
<path d="M41.4 406 V404.6 A2.2 2.2 0 0 1 45.8 404.6 V406" fill="none" stroke="#b4b4b4" stroke-width="1.1"/><rect x="40" y="405.8" width="7.2" height="4.8" fill="#b4b4b4"/><rect x="43" y="407.2" width="1.2" height="2" fill="#2e2e2e"/>
<rect x="52" y="402" width="1" height="9" fill="#151515"/>
<path d="M62.4 402.6 L66.6 402.2 L71.2 407.2 L67.6 410.8 L62.8 406 Z" fill="#b4b4b4"/><circle cx="64.4" cy="404.2" r="0.8" fill="#2e2e2e"/>
<rect x="76" y="402" width="1" height="9" fill="#151515"/>
<rect x="100" y="402" width="1" height="9" fill="#151515"/>
<rect x="198" y="402" width="1" height="9" fill="#151515"/>
<!-- shy -->
<path d="M205.4 409.8 H211.6 M206.6 403.4 H209.4 Q211 403.6 211 405.2 Q211 407 209.4 407 H206.6 M208 403.4 V409.8 M205.2 406 H207" stroke="#b4b4b4" stroke-width="1" fill="none"/>
<!-- collapse -->
<circle cx="218" cy="406.6" r="1.7" fill="none" stroke="#b4b4b4" stroke-width="1"/><path d="M218 402.6 V404.2 M218 409 V410.6 M214 406.6 H215.6 M220.4 406.6 H222 M215.2 403.8 L216.4 405 M219.6 408.2 L220.8 409.4 M220.8 403.8 L219.6 405 M216.4 408.2 L215.2 409.4" stroke="#b4b4b4" stroke-width="0.9"/>
<path d="M225.4 402.6 L232.6 409.8" stroke="#b4b4b4" stroke-width="1.1"/>
<rect x="247.4" y="402.6" width="8.6" height="7.6" fill="#8a8a8a" stroke="#b4b4b4" stroke-width="0.9"/><path d="M248.6 405 H254.8 M250.4 403 V405 M253 403 V405" stroke="#2e2e2e" stroke-width="0.8"/>
<g fill="#8a8a8a" stroke="#b4b4b4" stroke-width="0.8"><ellipse cx="264.6" cy="405" rx="3.4" ry="2.8" transform="rotate(-35 264.6 405)"/><ellipse cx="263" cy="406.6" rx="3.4" ry="2.8" transform="rotate(-35 263 406.6)"/><ellipse cx="261.6" cy="408.2" rx="3.4" ry="2.8" transform="rotate(-35 261.6 408.2)"/></g>
<circle cx="274.2" cy="406.6" r="3.6" fill="none" stroke="#b4b4b4" stroke-width="1"/><path d="M276.8 404 A3.6 3.6 0 0 1 271.6 409.2 Z" fill="#b4b4b4"/>
<g stroke="#b4b4b4" fill="none" stroke-width="0.9"><path d="M285.6 402.6 L289.6 404.4 L289.6 408.8 L285.6 410.6 L281.6 408.8 L281.6 404.4 Z M281.6 404.4 L285.6 406.2 L289.6 404.4 M285.6 406.2 V410.6"/></g>
<rect x="301" y="402" width="1" height="9" fill="#151515"/>
<rect x="389" y="402" width="1" height="9" fill="#151515"/>
</svg>
<span class="t" style="left:80px;top:51px;color:#8c8c8c;font-size:7px;line-height:11px">#</span>
<span class="t" style="transform-origin:0 50%;transform:scaleX(0.849);left:105px;top:51px;color:#8c8c8c;font-size:8px;line-height:11px">Layer Name</span>
<span class="t" style="left:236px;top:50.8px;color:#b4b4b4;font-size:9.5px;line-height:12px;font-style:italic">fx</span>
<span class="t" style="transform-origin:0 50%;transform:scaleX(0.854);left:305px;top:51px;color:#8c8c8c;font-size:8px;line-height:11px">Parent &amp; Link</span>
<!-- layer row -->
<div style="left:2px;top:64px;width:399px;height:12px;background:#494949"></div>
<div style="left:5px;top:65px;width:10px;height:9px;background:#353535"></div>
<div style="left:27px;top:65px;width:10px;height:9px;background:#353535"></div>
<div style="left:38px;top:65px;width:10px;height:9px;background:#353535"></div>
<div style="left:204px;top:65px;width:8px;height:9px;background:#353535"></div>
<div style="left:213px;top:65px;width:10px;height:9px;background:#353535"></div>
<div style="left:224px;top:65px;width:10px;height:9px;background:#353535"></div>
<div style="left:258px;top:65px;width:10px;height:9px;background:#353535"></div>
<div style="left:269px;top:65px;width:10px;height:9px;background:#353535"></div>
<div style="left:280px;top:65px;width:10px;height:9px;background:#353535"></div>
<div style="left:65px;top:65px;width:9px;height:9px;background:#6b7fe4"></div>
<div style="left:319px;top:65px;width:67px;height:10px;background:#1e1e1e"></div>
<svg style="left:2px;top:64px" width="399" height="12" viewBox="2 414 399 12">
<path d="M5.8 420 Q9.6 416 13.6 420 Q9.6 424 5.8 420 Z" fill="#c8c8c8"/><circle cx="9.7" cy="420" r="1.5" fill="#3c3c3c"/>
<path d="M56.4 417 L61.4 420 L56.4 423 Z" fill="#b4b4b4"/>
<path d="M108 416 L109 418.8 L112 418.8 L109.6 420.6 L110.6 423.6 L108 421.8 L105.4 423.6 L106.4 420.6 L104 418.8 L107 418.8 Z" fill="#b4b4b4"/>
<path d="M205.4 423.2 H211.6 M206.6 416.8 H209.4 Q211 417 211 418.6 Q211 420.4 209.4 420.4 H206.6 M208 416.8 V423.2 M205.2 419.4 H207" stroke="#b4b4b4" stroke-width="1" fill="none"/>
<circle cx="218" cy="420" r="1.5" fill="none" stroke="#8a8a8a" stroke-width="0.9"/><path d="M218 416.2 V417.8 M218 422.2 V423.8 M214.2 420 H215.8 M220.2 420 H221.8 M215.4 417.4 L216.4 418.4 M219.6 421.6 L220.6 422.6 M220.6 417.4 L219.6 418.4 M216.4 421.6 L215.4 422.6" stroke="#8a8a8a" stroke-width="0.8"/>
<path d="M225.6 423.4 L232.6 416.6" stroke="#c8c8c8" stroke-width="1.1"/>
<path d="M309.2 420 Q310 418.6 311 419.8 Q311.4 421.6 309.2 421.8 Q306.6 421.2 307.2 418.4 Q308.6 416 311.6 416.8 Q314.6 418.4 313.4 421.6 Q311.8 424 308.4 423.4 Q305.6 422.4 305.2 420" fill="none" stroke="#a8a8a8" stroke-width="0.9"/>
<path d="M376.2 418.6 L379 421.2 L381.8 418.6" fill="none" stroke="#b4b4b4" stroke-width="1"/>
</svg>
<span class="t" style="left:81px;top:64px;color:#c8c8c8;font-size:9px;line-height:12px">1</span>
<span class="t" style="transform-origin:0 50%;transform:scaleX(0.883);left:324px;top:64px;color:#c8c8c8;font-size:9px;line-height:12px">None</span>
<!-- name input -->
<div style="left:115px;top:63px;width:84px;height:13px;background:#f2f2f2;border:1px solid #3b8fe8;border-radius:2px"></div>
<span class="t" style="transform-origin:0 50%;transform:scaleX(0.905);left:120px;top:63px;color:#1e1e1e;font-size:9.5px;line-height:13px">background layer</span>
<div style="left:187px;top:65px;width:1px;height:10px;background:#222"></div>
<!-- red highlight -->
<div style="left:102px;top:48px;width:103px;height:38px;border:3px solid #e8000e"></div>
<!-- right side: time area -->
<div style="left:400px;top:26px;width:2px;height:136px;background:#161616"></div>
<div style="left:402px;top:26px;width:609px;height:136px;background:#232323"></div>
<div style="left:402px;top:76px;width:5px;height:86px;background:#282828"></div>
<div style="left:407px;top:76px;width:604px;height:86px;background:#2f2f2f"></div>
<div style="left:1005px;top:76px;width:6px;height:86px;background:#333"></div>
<!-- navigator -->
<div style="left:402px;top:26px;width:609px;height:8px;background:#121212"></div>
<div style="left:406px;top:27px;width:600px;height:6px;background:#6c6c6c"></div>
<div style="left:402px;top:27px;width:6px;height:6px;background:#2d8ceb;border-radius:3px 0 0 3px"></div>
<div style="left:1005px;top:27px;width:5px;height:6px;background:#2d8ceb;border-radius:0 3px 3px 0"></div>
<!-- ruler -->
<svg style="left:402px;top:34px" width="609" height="15" viewBox="402 384 609 15">
<g stroke="#8a8a8a" stroke-width="1">
<path d="M446.5 395 V398 M486.5 395 V398 M526.5 395 V398 M566.5 395 V398 M606.5 395 V398 M646.5 395 V398 M686.5 395 V398 M726.5 395 V398 M766.5 395 V398 M806.5 395 V398 M846.5 395 V398 M886.5 395 V398 M926.5 395 V398 M966.5 395 V398 M1005.5 395 V398"/>
</g>
<g font-family="Liberation Sans, sans-serif" font-size="7.3" fill="#a0a0a0" text-anchor="middle">
<text x="410.5" y="392.2">00s</text><text x="446" y="392.2">02s</text><text x="486" y="392.2">04s</text><text x="526" y="392.2">06s</text><text x="566" y="392.2">08s</text><text x="605" y="392.2">10s</text><text x="645" y="392.2">12s</text><text x="685" y="392.2">14s</text><text x="725" y="392.2">16s</text><text x="765" y="392.2">18s</text><text x="805" y="392.2">20s</text><text x="845" y="392.2">22s</text><text x="885" y="392.2">24s</text><text x="925" y="392.2">26s</text><text x="965" y="392.2">28s</text><text x="1004" y="392.2">30s</text>
</g>
</svg>
<!-- work area -->
<div style="left:402px;top:48px;width:609px;height:16px;background:#141414"></div>
<div style="left:407px;top:49px;width:599px;height:11px;background:linear-gradient(#6c6c6c 0,#6c6c6c 1px,#616161 1px)"></div>
<div style="left:402px;top:49px;width:6px;height:11px;background:#2d8ceb;border-radius:3px 0 0 3px"></div>
<div style="left:1005px;top:49px;width:5px;height:11px;background:#2d8ceb;border-radius:0 3px 3px 0"></div>
<div style="left:407px;top:61px;width:598px;height:2px;background:#12c41e"></div>
<!-- layer bar -->
<div style="left:402px;top:64px;width:5px;height:12px;background:#3a3a3a"></div>
<div style="left:407px;top:64px;width:598px;height:12px;background:linear-gradient(#8896ea 0,#6a7ade 1.5px,#5e6ed6 6px,#5464cc 10px,#4a58bc 12px)"></div>
<div style="left:1005px;top:64px;width:6px;height:12px;background:#4a4a4a"></div>
<div style="left:2px;top:76px;width:1009px;height:1px;background:#1a1a1a"></div>
<!-- playhead -->
<div style="left:406px;top:44px;width:1px;height:118px;background:#2d7fd6"></div>
<svg style="left:401px;top:36px" width="12" height="13"><path d="M1.4 1.4 H10.2 V5.6 L5.8 11.6 L1.4 5.6 Z" fill="#2d8ceb"/><path d="M5.9 6.4 V10.4" stroke="#8cbcf0" stroke-width="0.8"/></svg>
<!-- right column -->
<div style="left:1011px;top:26px;width:12px;height:136px;background:#232323"></div>
<div style="left:1011px;top:63px;width:12px;height:1px;background:#151515"></div>
<svg style="left:1011px;top:48px" width="12" height="30" viewBox="1011 398 12 30">
<path d="M1013 400.4 H1021.6 V407 L1017.3 411 L1013 407 Z" fill="#a0a0a0"/>
<path d="M1012.6 421 L1017 416.6 V419 H1021.6 V423 H1017 V425.4 Z" fill="none" stroke="#b4b4b4" stroke-width="0.9"/><rect x="1017.4" y="419.4" width="4" height="3.4" fill="#b4b4b4"/><circle cx="1016" cy="423.2" r="1.6" fill="#232323" stroke="#b4b4b4" stroke-width="0.8"/>
</svg>

</div>

</div>
</body>
</html>
